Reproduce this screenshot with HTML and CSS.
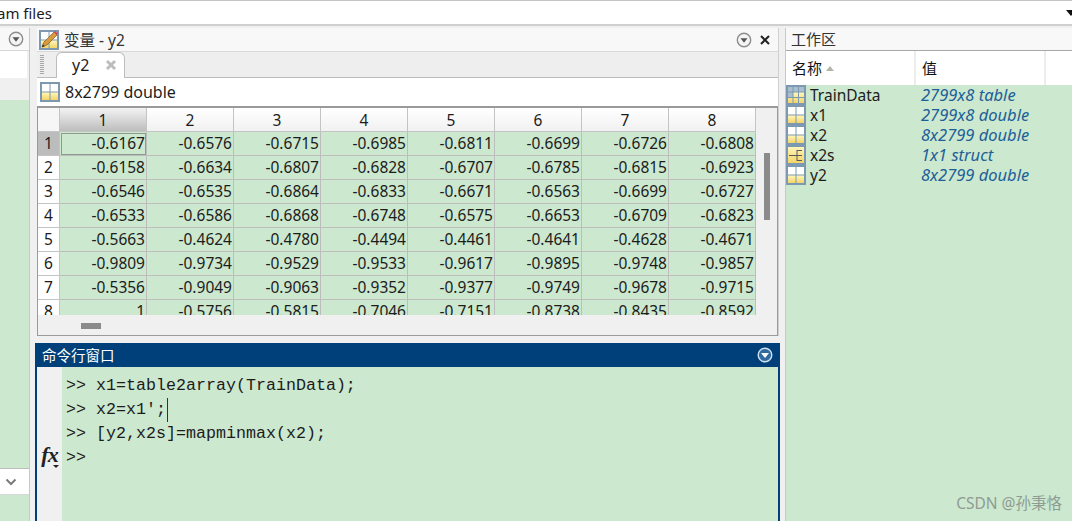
FILE: index.html
```html
<!DOCTYPE html>
<html lang="zh">
<head>
<meta charset="utf-8">
<title>MATLAB</title>
<link rel="stylesheet" href="styles.css">
</head>
<body>
<svg class="defs" width="0" height="0">
  <defs>
    <linearGradient id="yel" x1="0" y1="0" x2="0" y2="1"><stop offset="0" stop-color="#fff6b8"/><stop offset="1" stop-color="#f3d468"/></linearGradient>
    <symbol id="arr" viewBox="0 0 20 20">
      <rect width="20" height="20" fill="#7d99b1"/>
      <rect x="2" y="2" width="7.500" height="7.500" fill="#fff"/><rect x="10.500" y="2" width="7.500" height="7.500" fill="#fff"/>
      <rect x="2" y="10.500" width="7.500" height="7.500" fill="url(#yel)"/><rect x="10.500" y="10.500" width="7.500" height="7.500" fill="url(#yel)"/>
    </symbol>
    <symbol id="tbl" viewBox="0 0 20 20">
      <rect width="20" height="20" fill="#7d99b1"/>
      <path d="M2 2h4.500v4.500H2zM7.500 2H12v4.500H7.500zM13 2h5v4.500h-5zM2 7.500h4.500V12H2z" fill="#a9bfd0"/>
      <path d="M7.500 7.500H12V12H7.500zM13 7.500h5V12h-5zM2 13h4.500v5H2zM7.500 13H12v5H7.500zM13 13h5v5h-5z" fill="url(#yel)"/>
    </symbol>
    <symbol id="st" viewBox="0 0 20 20">
      <rect width="20" height="20" fill="#7d99b1"/>
      <rect x="2" y="2" width="16" height="16" fill="url(#yel)"/>
      <path d="M3 10.500h8M11 5.500h5M11 5v11M11 10.500h5M11 15.500h5" stroke="#5a5a5a" fill="none"/>
    </symbol>
    <symbol id="dd" viewBox="0 0 16 16">
      <circle cx="8" cy="8" r="6.700" fill="#f4f4f4" stroke="#8d8d8d" stroke-width="1.400"/>
      <path d="M4.500 6.200h7L8 10.800z" fill="#555"/>
    </symbol>
  </defs>
</svg>

<header class="pathbar"><span class="pathtext">am files</span><span class="pathcaret"></span></header>

<main class="desk">
  <aside class="files">
    <div class="ftitle"><svg class="ico16"><use href="#dd"/></svg></div>
    <div class="fwhite"></div>
    <div class="fgray"></div>
    <div class="fgreen"></div>
    <div class="fdrop">
      <svg class="chev" viewBox="0 0 12 8"><path d="M1.500 1.500 6 6l4.500-4.500" fill="none" stroke="#7b7b7b" stroke-width="2"/></svg>
    </div>
    <div class="fgreen2"></div>
  </aside>

  <section class="center">
    <div class="vars">
      <div class="vtitle">
        <svg class="pencil" viewBox="0 0 20 20">
          <use href="#arr" width="20" height="20"/>
          <path d="M3 17 5 12 15 2l3 3L8 15z" fill="#d99a3c" stroke="#7a5a24" stroke-width=".7"/>
          <path d="M15 2l3 3 1-1.500-2.500-2.500z" fill="#d6455c"/>
          <path d="M3 17l.8-2.800 2 2z" fill="#333"/>
        </svg>
        <span class="vname">变量 - y2</span>
        <span class="grow"></span>
        <svg class="ico16"><use href="#dd"/></svg>
        <svg class="closex" viewBox="0 0 10 10"><path d="M1 1l8 8M9 1 1 9" stroke="#222" stroke-width="2"/></svg>
      </div>
      <div class="tabstrip">
        <span class="grip"></span>
        <div class="tab"><span class="tabname">y2</span>
          <svg class="tabx" viewBox="0 0 12 12"><path d="M2 2l8 8M10 2 2 10" stroke="#bdbdbd" stroke-width="3"/></svg>
        </div>
      </div>
      <div class="info"><svg class="ico20"><use href="#arr"/></svg><span>8x2799 double</span></div>
      <div class="sheet">
        <div class="gridrow">
          <div class="viewport">
            <table class="grid">
              <thead><tr><th class="corner"></th><th class="active">1</th><th>2</th><th>3</th><th>4</th><th>5</th><th>6</th><th>7</th><th>8</th></tr></thead>
              <tbody>
                <tr><th class="active">1</th><td class="sel">-0.6167</td><td>-0.6576</td><td>-0.6715</td><td>-0.6985</td><td>-0.6811</td><td>-0.6699</td><td>-0.6726</td><td>-0.6808</td></tr>
                <tr><th>2</th><td>-0.6158</td><td>-0.6634</td><td>-0.6807</td><td>-0.6828</td><td>-0.6707</td><td>-0.6785</td><td>-0.6815</td><td>-0.6923</td></tr>
                <tr><th>3</th><td>-0.6546</td><td>-0.6535</td><td>-0.6864</td><td>-0.6833</td><td>-0.6671</td><td>-0.6563</td><td>-0.6699</td><td>-0.6727</td></tr>
                <tr><th>4</th><td>-0.6533</td><td>-0.6586</td><td>-0.6868</td><td>-0.6748</td><td>-0.6575</td><td>-0.6653</td><td>-0.6709</td><td>-0.6823</td></tr>
                <tr><th>5</th><td>-0.5663</td><td>-0.4624</td><td>-0.4780</td><td>-0.4494</td><td>-0.4461</td><td>-0.4641</td><td>-0.4628</td><td>-0.4671</td></tr>
                <tr><th>6</th><td>-0.9809</td><td>-0.9734</td><td>-0.9529</td><td>-0.9533</td><td>-0.9617</td><td>-0.9895</td><td>-0.9748</td><td>-0.9857</td></tr>
                <tr><th>7</th><td>-0.5356</td><td>-0.9049</td><td>-0.9063</td><td>-0.9352</td><td>-0.9377</td><td>-0.9749</td><td>-0.9678</td><td>-0.9715</td></tr>
                <tr><th>8</th><td>1</td><td>-0.5756</td><td>-0.5815</td><td>-0.7046</td><td>-0.7151</td><td>-0.8738</td><td>-0.8435</td><td>-0.8592</td></tr>
              </tbody>
            </table>
          </div>
          <div class="vscroll"><div class="vthumb"></div></div>
        </div>
        <div class="hscroll"><div class="hthumb"></div></div>
      </div>
    </div>

    <div class="cmd">
      <div class="ctitle"><span>命令行窗口</span><svg class="ddw" viewBox="0 0 16 16"><circle cx="8" cy="8" r="6.800" fill="#2f6aa0" stroke="#cfe0ee" stroke-width="1.400"/><path d="M4 6h8l-4 5z" fill="#fff"/></svg></div>
      <div class="cbody">
        <div class="gutter"><span class="fx">fx</span><span class="fxcaret"></span></div>
        <pre class="console"><code class="ccode">&gt;&gt; x1=table2array(TrainData);
&gt;&gt; x2=x1';<span class="cursor"></span>
&gt;&gt; [y2,x2s]=mapminmax(x2);
&gt;&gt;</code></pre>
      </div>
    </div>
  </section>

  <aside class="ws">
    <div class="wtitle">工作区</div>
    <div class="whead">
      <div class="wh wh1">名称<span class="sort"></span></div>
      <div class="wh wh2">值</div>
      <div class="wh wh3"></div>
    </div>
    <div class="wlist">
      <div class="wrow"><svg class="ico20"><use href="#tbl"/></svg><span class="wn">TrainData</span><span class="wv">2799x8 table</span></div>
      <div class="wrow"><svg class="ico20"><use href="#arr"/></svg><span class="wn">x1</span><span class="wv">2799x8 double</span></div>
      <div class="wrow"><svg class="ico20"><use href="#arr"/></svg><span class="wn">x2</span><span class="wv">8x2799 double</span></div>
      <div class="wrow"><svg class="ico20"><use href="#st"/></svg><span class="wn">x2s</span><span class="wv">1x1 struct</span></div>
      <div class="wrow"><svg class="ico20"><use href="#arr"/></svg><span class="wn">y2</span><span class="wv">8x2799 double</span></div>
    </div>
  </aside>
</main>
<div class="mark">CSDN @孙秉恪</div>
</body>
</html>
```
FILE: styles.css
```css
* { box-sizing: border-box; }
html, body { margin: 0; height: 100%; }
body {
  width: 1072px; height: 521px; overflow: hidden; position: relative;
  background: #f0f0f0; color: #1c1c1c;
  font: 15px/20px "Noto Sans", "Noto Sans CJK SC", sans-serif;
  display: flex; flex-direction: column;
}
.defs { position: absolute; }
.grow { flex: 1; }

.pathbar {
  height: 26px; flex: none; background: #fff;
  border-top: 1px solid #c4c4c4; border-bottom: 2px solid #cfcfcf;
  display: flex; align-items: center; justify-content: space-between;
  overflow: hidden;
}
.pathtext { margin-left: -3px; font-size: 15px; }
.pathcaret { width: 0; height: 0; margin-right: -4px; border: 5px solid transparent; border-top: 6px solid #111; border-bottom: 0; }

.desk { flex: 1; min-height: 0; display: flex; padding-top: 2px; }

.files { width: 30px; flex: none; border-right: 1px solid #c8c8c8; display: flex; flex-direction: column; }
.ftitle { height: 23px; background: #f8f8f8; border-bottom: 1px solid #d8d8d8; display: flex; align-items: center; justify-content: flex-end; padding-right: 5px; }
.fwhite { height: 27px; background: #fff; margin-right: 2px; }
.fgray { height: 22px; background: #f0f0f0; }
.fgreen { height: 368px; background: #cce8cf; }
.fdrop { height: 27px; background: #fff; border-top: 1px solid #bdbdbd; border-bottom: 1px solid #d8d8d8; display: flex; align-items: center; justify-content: flex-end; padding-right: 12px; }
.chev { width: 12px; height: 8px; }
.fgreen2 { flex: 1; background: #cce8cf; }
.ico16 { width: 16px; height: 16px; flex: none; }
.ico20 { width: 20px; height: 20px; flex: none; }

.center { width: 744px; margin-left: 5px; flex: none; display: flex; flex-direction: column; }
.vars { height: 308px; flex: none; margin: 0 0 0 2px; display: flex; flex-direction: column; border-right: 1px solid #d0d0d0; }
.vtitle { height: 24px; background: #f8f8f8; border-bottom: 1px solid #d8d8d8; display: flex; align-items: center; padding: 0 8px 0 2px; flex: none; }
.pencil { width: 20px; height: 20px; flex: none; }
.vname { margin-left: 5px; color: #333; font-size: 15.500px; }
.closex { width: 10px; height: 10px; margin-left: 8px; }

.tabstrip { height: 26px; background: #eeeeee; border-bottom: 1px solid #bdbdbd; display: flex; padding-left: 3px; flex: none; }
.grip { width: 4px; height: 20px; margin: 3px 0 0 0; background: repeating-linear-gradient(#a8a8a8 0 1px, transparent 1px 2px); }
.tab {
  width: 69px; height: 26px; margin-left: 12px; background: #fff;
  border: 1px solid #bdbdbd; border-bottom: 0; border-radius: 6px 6px 0 0;
  display: flex; align-items: center; padding: 0 7px 2px 15px; justify-content: space-between; position: relative;
}
.tabname { font-size: 16px; }
.tabx { width: 12px; height: 12px; }

.info { height: 28px; background: #fff; display: flex; align-items: center; gap: 5px; padding-left: 3px; flex: none; font-size: 16px; }

.sheet { flex: 1; min-height: 0; border: 1px solid #9a9a9a; border-top-width: 2px; background: #f0f0f0; display: flex; flex-direction: column; }
.gridrow { display: flex; height: 207px; flex: none; }
.viewport { width: 718px; overflow: hidden; height: 207px; flex: none; }
.grid { border-collapse: separate; border-spacing: 0; table-layout: fixed; width: 718px; }
.grid th, .grid td { padding: 0; font-weight: 400; height: 24px; line-height: 23px; overflow: hidden; }
.grid thead th {
  width: 87px; background: linear-gradient(#ffffff, #f1f1f1);
  text-align: center; border-right: 1px solid #c4c4c4; border-bottom: 1px solid #c4c4c4; height: 24px; font-size: 15.500px; padding-top: 1px; line-height: 22px;
}
.grid thead th.corner { width: 22px; background: #f6f6f6; }
.grid thead th.active { background: linear-gradient(#f3f3f3, #bdbdbd); }
.grid tbody th { background: #fff; text-align: center; border-right: 1px solid #c4c4c4; border-bottom: 1px solid #c4c4c4; font-size: 15.500px; }
.grid tbody th.active { background: #bcbcbc; }
.grid td {
  background: #cce8cf; text-align: right; padding-right: 1px;
  border-right: 1px solid #bdbdbd; border-bottom: 1px solid #bdbdbd; font-size: 15.500px;
}
.grid td.sel { outline: 1px solid #8f9a90; outline-offset: -2px; }
.vscroll { flex: 1; background: #f0f0f0; padding: 45px 0 0 8px; }
.vthumb { width: 6px; height: 67px; background: #8b8b8b; }
.hscroll { flex: 1; background: #f0f0f0; padding: 8px 0 0 43px; }
.hthumb { width: 20px; height: 6px; background: #8b8b8b; }

.cmd { flex: 1; min-height: 0; margin-top: 7px; display: flex; flex-direction: column; border-left: 2px solid #00407a; border-right: 2px solid #00407a; width: 745px; }
.ctitle { height: 24px; background: #00407a; color: #fff; display: flex; align-items: center; justify-content: space-between; padding: 0 5px 0 5px; flex: none; font-size: 14.500px; }
.ddw { width: 16px; height: 16px; }
.cbody { flex: 1; display: flex; min-height: 0; background: #cce8cf; }
.gutter { width: 25px; background: #f0f0f0; flex: none; position: relative; display: flex; justify-content: center; padding-top: 76px; }
.fx { font: italic 700 22px/24px "Liberation Serif", serif; letter-spacing: -1px; color: #222; }
.fxcaret { position: absolute; left: 16px; top: 98px; border: 3px solid transparent; border-top: 3px solid #222; border-bottom: 0; }
.console { margin: 0; padding: 7px 0 0 4px; font: 16.670px/24px "Liberation Mono", monospace; color: #1c1c1c; }
.ccode { font: inherit; }
.cursor { display: inline-block; width: 1px; height: 24px; background: #333; vertical-align: top; margin-left: 1px; }

.ws { flex: 1; margin-left: 6px; border-left: 1px solid #c8c8c8; display: flex; flex-direction: column; min-width: 0; }
.wtitle { height: 23px; background: #f8f8f8; padding-left: 5px; color: #333; font-size: 15px; line-height: 23px; border-bottom: 1px solid #a8a8a8; flex: none; }
.whead { height: 34px; background: #fff; display: flex; flex: none; }
.wh { height: 34px; border-right: 2px solid #ededed; padding: 7px 0 0 6px; font-size: 15px; color: #111; display: flex; align-items: flex-start; }
.wh1 { width: 130px; }
.wh2 { width: 130px; }
.wh3 { flex: 1; border-right: 0; }
.sort { width: 0; height: 0; margin: 8px 0 0 4px; border: 4px solid transparent; border-bottom: 5px solid #b5b5a5; border-top: 0; }
.wlist { flex: 1; background: #cce8cf; display: flex; flex-direction: column; }
.wrow { height: 20px; display: flex; align-items: center; flex: none; }
.wn { width: 111px; margin-left: 4px; font-size: 15.500px; }
.wv { font-style: italic; color: #1d5f98; font-size: 16.500px; }

.mark { position: absolute; right: 10px; bottom: 8px; color: #8f9c94; font-size: 15.500px; }
```
